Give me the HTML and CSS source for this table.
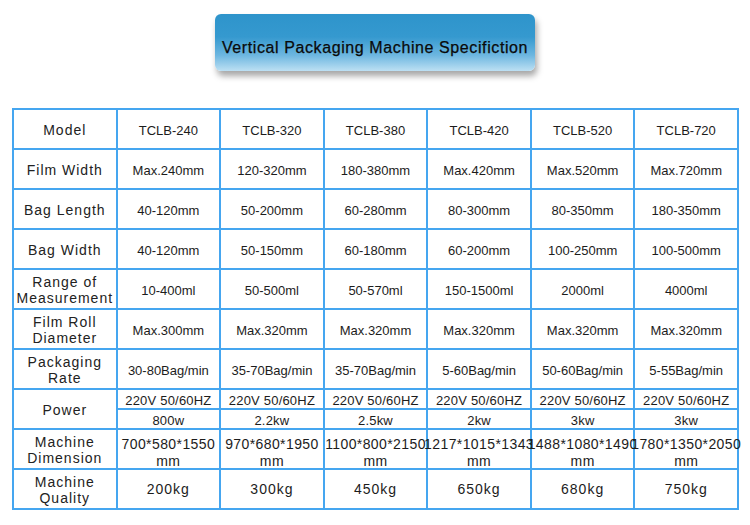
FILE: index.html
```html
<!DOCTYPE html>
<html>
<head>
<meta charset="utf-8">
<link rel="stylesheet" href="styles.css">
</head>
<body>
<div class="head">
  <div class="title">Vertical Packaging Machine Specifiction</div>
</div>
<div class="spec">
  <div class="lab">Model</div>
  <div>TCLB-240</div><div>TCLB-320</div><div>TCLB-380</div><div>TCLB-420</div><div>TCLB-520</div><div>TCLB-720</div>

  <div class="lab">Film Width</div>
  <div>Max.240mm</div><div>120-320mm</div><div>180-380mm</div><div>Max.420mm</div><div>Max.520mm</div><div>Max.720mm</div>

  <div class="lab">Bag Length</div>
  <div>40-120mm</div><div>50-200mm</div><div>60-280mm</div><div>80-300mm</div><div>80-350mm</div><div>180-350mm</div>

  <div class="lab">Bag Width</div>
  <div>40-120mm</div><div>50-150mm</div><div>60-180mm</div><div>60-200mm</div><div>100-250mm</div><div>100-500mm</div>

  <div class="lab">Range of<br>Measurement</div>
  <div>10-400ml</div><div>50-500ml</div><div>50-570ml</div><div>150-1500ml</div><div>2000ml</div><div>4000ml</div>

  <div class="lab">Film Roll<br>Diameter</div>
  <div>Max.300mm</div><div>Max.320mm</div><div>Max.320mm</div><div>Max.320mm</div><div>Max.320mm</div><div>Max.320mm</div>

  <div class="lab">Packaging<br>Rate</div>
  <div>30-80Bag/min</div><div>35-70Bag/min</div><div>35-70Bag/min</div><div>5-60Bag/min</div><div>50-60Bag/min</div><div>5-55Bag/min</div>

  <div class="lab power">Power</div>
  <div class="volt">220V 50/60HZ</div><div class="volt">220V 50/60HZ</div><div class="volt">220V 50/60HZ</div><div class="volt">220V 50/60HZ</div><div class="volt">220V 50/60HZ</div><div class="volt">220V 50/60HZ</div>
  <div class="watt">800w</div><div class="watt">2.2kw</div><div class="watt">2.5kw</div><div class="watt">2kw</div><div class="watt">3kw</div><div class="watt">3kw</div>

  <div class="lab">Machine<br>Dimension</div>
  <div class="dim">700*580*1550<br>mm</div><div class="dim">970*680*1950<br>mm</div><div class="dim">1100*800*2150<br>mm</div><div class="dim">1217*1015*1343<br>mm</div><div class="dim">1488*1080*1490<br>mm</div><div class="dim">1780*1350*2050<br>mm</div>

  <div class="lab">Machine<br>Quality</div>
  <div class="kg">200kg</div><div class="kg">300kg</div><div class="kg">450kg</div><div class="kg">650kg</div><div class="kg">680kg</div><div class="kg">750kg</div>
</div>
</body>
</html>
```

FILE: styles.css
```css
html, body {
  margin: 0;
  padding: 0;
  background: #ffffff;
}
body {
  font-family: "Liberation Sans", Arial, sans-serif;
  color: #1c1c1c;
}
.head {
  padding-top: 14px;
  display: flex;
  justify-content: center;
}
.title {
  width: 320px;
  height: 57px;
  border-radius: 6px;
  background: linear-gradient(to bottom, #2e94cb 0%, #3599cf 40%, #6cb6e0 72%, #bde0f3 100%);
  box-shadow: 2px 5px 6px rgba(0, 0, 0, 0.35);
  display: flex;
  align-items: center;
  justify-content: center;
  font-size: 16px;
  letter-spacing: 0.6px;
  color: #0a0a0a;
  -webkit-text-stroke: 0.25px #0a0a0a;
  padding-top: 10px;
  box-sizing: border-box;
}
.spec {
  margin: 37px 0 0 12px;
  width: 727px;
  box-sizing: border-box;
  padding: 2px;
  gap: 2px;
  background: #45a6f0;
  display: grid;
  grid-template-columns: repeat(7, minmax(0, 1fr));
  grid-template-rows: repeat(7, 38px) 18px 18px 38px 38px;
}
.spec > div {
  background: #ffffff;
  display: flex;
  align-items: center;
  justify-content: center;
  text-align: center;
  font-size: 13px;
  line-height: 16px;
  white-space: nowrap;
  overflow: visible;
  min-width: 0;
  padding-top: 4px;
  box-sizing: border-box;
}
.spec > .lab {
  font-size: 14px;
  letter-spacing: 1px;
  line-height: 16px;
  color: #222;
  padding-top: 1px;
}
.spec > .power {
  grid-row: span 2;
}
.spec > .volt,
.spec > .watt {
  letter-spacing: 0.2px;
  padding-top: 3px;
}
.spec > .dim {
  font-size: 14px;
  letter-spacing: 0.4px;
  line-height: 17px;
  padding-top: 7px;
}
.spec > .kg {
  font-size: 14px;
  letter-spacing: 1px;
  padding-top: 0;
}
```
